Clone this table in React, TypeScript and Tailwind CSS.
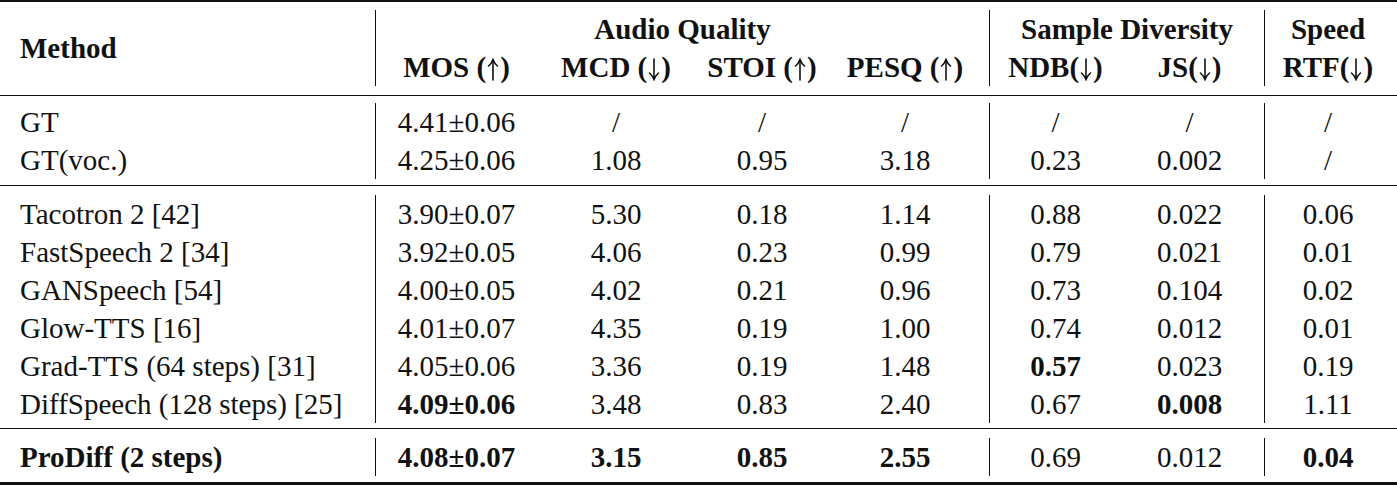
const cols = "grid grid-cols-[375px_162px_158px_134px_160px_132px_143px_1fr]";

type Cell = { v: string; b?: boolean };
type Row = { name: string; bold?: boolean; cells: Cell[] };

const c = (v: string, b = false): Cell => ({ v, b });

const groups: Row[][] = [
  [
    { name: "GT", cells: [c("4.41±0.06"), c("/"), c("/"), c("/"), c("/"), c("/"), c("/")] },
    { name: "GT(voc.)", cells: [c("4.25±0.06"), c("1.08"), c("0.95"), c("3.18"), c("0.23"), c("0.002"), c("/")] },
  ],
  [
    { name: "Tacotron 2 [42]", cells: [c("3.90±0.07"), c("5.30"), c("0.18"), c("1.14"), c("0.88"), c("0.022"), c("0.06")] },
    { name: "FastSpeech 2 [34]", cells: [c("3.92±0.05"), c("4.06"), c("0.23"), c("0.99"), c("0.79"), c("0.021"), c("0.01")] },
    { name: "GANSpeech [54]", cells: [c("4.00±0.05"), c("4.02"), c("0.21"), c("0.96"), c("0.73"), c("0.104"), c("0.02")] },
    { name: "Glow-TTS [16]", cells: [c("4.01±0.07"), c("4.35"), c("0.19"), c("1.00"), c("0.74"), c("0.012"), c("0.01")] },
    { name: "Grad-TTS (64 steps) [31]", cells: [c("4.05±0.06"), c("3.36"), c("0.19"), c("1.48"), c("0.57", true), c("0.023"), c("0.19")] },
    { name: "DiffSpeech (128 steps) [25]", cells: [c("4.09±0.06", true), c("3.48"), c("0.83"), c("2.40"), c("0.67"), c("0.008", true), c("1.11")] },
  ],
  [
    {
      name: "ProDiff (2 steps)",
      bold: true,
      cells: [c("4.08±0.07", true), c("3.15", true), c("0.85", true), c("2.55", true), c("0.69"), c("0.012"), c("0.04", true)],
    },
  ],
];

// extra classes per data column: borders that start a group, right padding that recentres
const colCls = [
  "border-l border-[#111]",
  "",
  "",
  "pr-[8px]",
  "border-l border-[#111]",
  "pr-[6px]",
  "border-l border-[#111] pr-[6px]",
];

const sectionPad = ["pt-[7px] pb-[6px]", "pt-[9px] pb-[5px]", "pt-[9px] pb-[6px]"];

// thin math-style arrow, narrower than any installed font's glyph
function Arrow({ up }: { up?: boolean }) {
  return (
    <svg
      width="12"
      height="23"
      viewBox="0 0 12 23"
      className="inline-block align-[-4px] mx-[1px]"
      fill="none"
      stroke="#111"
      strokeWidth="1.6"
      strokeLinecap="round"
    >
      {up ? (
        <>
          <path d="M6 2.5V22" />
          <path d="M1.5 8Q4.5 5.5 6 1.5Q7.5 5.5 10.5 8" />
        </>
      ) : (
        <>
          <path d="M6 1V20.5" />
          <path d="M1.5 15Q4.5 17.5 6 21.5Q7.5 17.5 10.5 15" />
        </>
      )}
    </svg>
  );
}

function DataRow({ row }: { row: Row }) {
  return (
    <>
      <div className={`h-[38px] pl-[20px] whitespace-nowrap ${row.bold ? "font-bold" : ""}`}>{row.name}</div>
      {row.cells.map((cell, i) => (
        <div key={i} className={`h-[38px] text-center whitespace-nowrap ${colCls[i]} ${cell.b ? "font-bold" : ""}`}>
          {cell.v}
        </div>
      ))}
    </>
  );
}

export default function App() {
  return (
    <div
      className="w-[1397px] h-[486px] bg-white text-[#111] text-[29px] leading-[38px]"
      style={{ fontFamily: '"Liberation Serif", "Times New Roman", serif' }}
    >
      <div className="h-[2px] bg-[#111]" />

      {/* header */}
      <div className={`${cols} pt-[8px] pb-[9px] font-bold`}>
        <div className="row-span-2 pl-[20px] flex items-center">Method</div>
        <div className="col-span-4 h-[38px] text-center border-l border-[#111]">Audio Quality</div>
        <div className="col-span-2 h-[38px] text-center border-l border-[#111]">Sample Diversity</div>
        <div className="h-[38px] text-center border-l border-[#111] pr-[6px]">Speed</div>
        <div className="h-[38px] text-center border-l border-[#111] whitespace-nowrap">
          MOS (<Arrow up />)
        </div>
        <div className="h-[38px] text-center whitespace-nowrap">
          MCD (<Arrow />)
        </div>
        <div className="h-[38px] text-center whitespace-nowrap">
          STOI (<Arrow up />)
        </div>
        <div className="h-[38px] text-center pr-[8px] whitespace-nowrap">
          PESQ (<Arrow up />)
        </div>
        <div className="h-[38px] text-center border-l border-[#111] whitespace-nowrap">
          NDB(<Arrow />)
        </div>
        <div className="h-[38px] text-center pr-[6px] whitespace-nowrap">
          JS(<Arrow />)
        </div>
        <div className="h-[38px] text-center border-l border-[#111] pr-[6px] whitespace-nowrap">
          RTF(<Arrow />)
        </div>
      </div>

      {groups.map((g, gi) => (
        <div key={gi}>
          <div className="h-px bg-[#111]" />
          <div className={`${cols} ${sectionPad[gi]}`}>
            {g.map((r) => (
              <DataRow key={r.name} row={r} />
            ))}
          </div>
        </div>
      ))}

      <div className="h-[3px] bg-[#111]" />
    </div>
  );
}
